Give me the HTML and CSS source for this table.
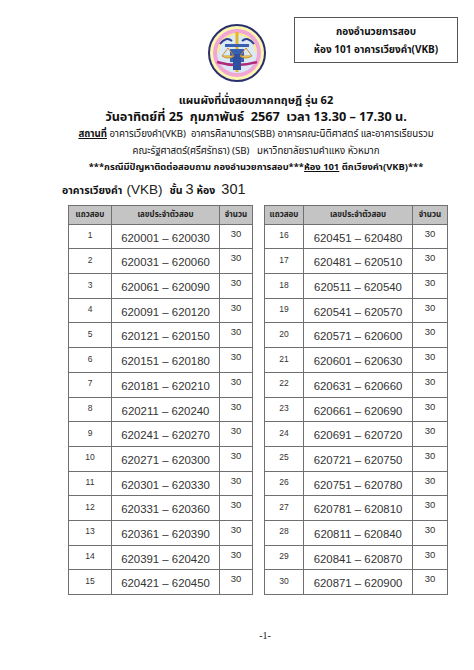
FILE: index.html
```html
<!DOCTYPE html>
<html lang="th">
<head>
<meta charset="utf-8">
<link rel="stylesheet" href="styles.css">
</head>
<body>
<div class="page">
  <header class="top">
    <div class="spacer"></div>
    <div class="logo">
      <svg width="58" height="58" viewBox="0 0 58 58">
        <circle cx="29" cy="29" r="28" fill="#fdf6b0" stroke="#2a2f6e" stroke-width="2"/>
        <circle cx="29" cy="29" r="24" fill="#f2a6d6"/>
        <circle cx="29" cy="29" r="20" fill="#dbe9f7"/>
        <path d="M10 29 A19 19 0 0 1 48 29" fill="none" stroke="#fbe98a" stroke-width="2"/>
        <path d="M9 38 Q29 44 49 38" fill="none" stroke="#b02a7a" stroke-width="2.5"/>
        <path d="M12 20 Q18 12 24 17 M46 20 Q40 12 34 17" fill="none" stroke="#2a3f8f" stroke-width="2"/>
        <rect x="27.5" y="8" width="3" height="40" fill="#e0b530"/>
        <rect x="17" y="20" width="24" height="3" fill="#3b5fb0"/>
        <rect x="22" y="25" width="14" height="13" fill="#3b5fb0"/>
        <rect x="25" y="30" width="8" height="16" fill="#2f4f9f"/>
        <path d="M14 32 L20 24 L26 32 Z M32 32 L38 24 L44 32 Z" fill="none" stroke="#c9962a" stroke-width="1"/>
        <path d="M14 32 Q20 36 26 32 M32 32 Q38 36 44 32" fill="#e6c35a" stroke="#c9962a" stroke-width="1"/>
      </svg>
    </div>
    <div class="boxwrap">
      <div class="office">
        <div>กองอำนวยการสอบ</div>
        <div>ห้อง 101 อาคารเวียงคำ(VKB)</div>
      </div>
    </div>
  </header>

  <section class="intro">
    <p class="t1">แผนผังที่นั่งสอบภาคทฤษฎี รุ่น 62</p>
    <p class="t2">วันอาทิตย์ที่ 25&nbsp; กุมภาพันธ์&nbsp; 2567&nbsp; เวลา 13.30 – 17.30 น.</p>
    <p class="t3"><b class="u">สถานที่</b> อาคารเวียงคำ(VKB)&nbsp; อาคารศิลาบาตร(SBB) อาคารคณะนิติศาสตร์ และอาคารเรียนรวม</p>
    <p class="t3">คณะรัฐศาสตร์(ศรีศรัทธา) (SB)&nbsp;&nbsp; มหาวิทยาลัยรามคำแหง หัวหมาก</p>
    <p class="t4">***กรณีมีปัญหาติดต่อสอบถาม กองอำนวยการสอบ***<span class="u">ห้อง 101</span> ตึกเวียงคำ(VKB)***</p>
  </section>

  <h2 class="room"><span class="th">อาคารเวียงคำ</span><span class="en vkb">(VKB)</span><span class="th floor">ชั้น</span><span class="en num">3</span><span class="th">ห้อง</span><span class="en rm">301</span></h2>

  <div class="tables">
    <table class="seats left">
      <thead><tr><th class="c1">แถวสอบ</th><th class="c2">เลขประจำตัวสอบ</th><th class="c3">จำนวน</th></tr></thead>
      <tbody>
        <tr><td class="n">1</td><td class="r">620001 – 620030</td><td class="k">30</td></tr>
        <tr><td class="n">2</td><td class="r">620031 – 620060</td><td class="k">30</td></tr>
        <tr><td class="n">3</td><td class="r">620061 – 620090</td><td class="k">30</td></tr>
        <tr><td class="n">4</td><td class="r">620091 – 620120</td><td class="k">30</td></tr>
        <tr><td class="n">5</td><td class="r">620121 – 620150</td><td class="k">30</td></tr>
        <tr><td class="n">6</td><td class="r">620151 – 620180</td><td class="k">30</td></tr>
        <tr><td class="n">7</td><td class="r">620181 – 620210</td><td class="k">30</td></tr>
        <tr><td class="n">8</td><td class="r">620211 – 620240</td><td class="k">30</td></tr>
        <tr><td class="n">9</td><td class="r">620241 – 620270</td><td class="k">30</td></tr>
        <tr><td class="n">10</td><td class="r">620271 – 620300</td><td class="k">30</td></tr>
        <tr><td class="n">11</td><td class="r">620301 – 620330</td><td class="k">30</td></tr>
        <tr><td class="n">12</td><td class="r">620331 – 620360</td><td class="k">30</td></tr>
        <tr><td class="n">13</td><td class="r">620361 – 620390</td><td class="k">30</td></tr>
        <tr><td class="n">14</td><td class="r">620391 – 620420</td><td class="k">30</td></tr>
        <tr><td class="n">15</td><td class="r">620421 – 620450</td><td class="k">30</td></tr>
      </tbody>
    </table>
    <table class="seats right">
      <thead><tr><th class="c1">แถวสอบ</th><th class="c2">เลขประจำตัวสอบ</th><th class="c3">จำนวน</th></tr></thead>
      <tbody>
        <tr><td class="n">16</td><td class="r">620451 – 620480</td><td class="k">30</td></tr>
        <tr><td class="n">17</td><td class="r">620481 – 620510</td><td class="k">30</td></tr>
        <tr><td class="n">18</td><td class="r">620511 – 620540</td><td class="k">30</td></tr>
        <tr><td class="n">19</td><td class="r">620541 – 620570</td><td class="k">30</td></tr>
        <tr><td class="n">20</td><td class="r">620571 – 620600</td><td class="k">30</td></tr>
        <tr><td class="n">21</td><td class="r">620601 – 620630</td><td class="k">30</td></tr>
        <tr><td class="n">22</td><td class="r">620631 – 620660</td><td class="k">30</td></tr>
        <tr><td class="n">23</td><td class="r">620661 – 620690</td><td class="k">30</td></tr>
        <tr><td class="n">24</td><td class="r">620691 – 620720</td><td class="k">30</td></tr>
        <tr><td class="n">25</td><td class="r">620721 – 620750</td><td class="k">30</td></tr>
        <tr><td class="n">26</td><td class="r">620751 – 620780</td><td class="k">30</td></tr>
        <tr><td class="n">27</td><td class="r">620781 – 620810</td><td class="k">30</td></tr>
        <tr><td class="n">28</td><td class="r">620811 – 620840</td><td class="k">30</td></tr>
        <tr><td class="n">29</td><td class="r">620841 – 620870</td><td class="k">30</td></tr>
        <tr><td class="n">30</td><td class="r">620871 – 620900</td><td class="k">30</td></tr>
      </tbody>
    </table>
  </div>

  <footer class="pageno">-1-</footer>
</div>
</body>
</html>
```

FILE: styles.css
```css
html, body {
  margin: 0;
  padding: 0;
  background: #ffffff;
}
body {
  width: 474px;
  height: 670px;
  overflow: hidden;
  color: #111;
  font-family: "Noto Sans Thai", "Tahoma", "Loma", "Garuda", "DejaVu Sans", "Liberation Sans", sans-serif;
}
.page {
  display: flex;
  flex-direction: column;
}
.top {
  display: grid;
  grid-template-columns: 208px 58px 1fr;
  height: 84px;
}
.logo {
  padding-top: 24px;
  height: 58px;
}
.logo svg { display: block; }
.boxwrap {
  padding-top: 17px;
  padding-left: 28px;
}
.office {
  width: 162px;
  height: 42px;
  border: 1px solid #555;
  display: flex;
  flex-direction: column;
  justify-content: center;
  align-items: center;
  gap: 2px;
  font-size: 10px;
  font-weight: bold;
  line-height: 16px;
  padding-top: 2px;
  box-sizing: content-box;
}
.intro {
  padding-left: 38px;
  text-align: center;
  margin-top: 8px;
}
.intro p { margin: 0; white-space: nowrap; }
.t1 { font-size: 11px; font-weight: bold; line-height: 17px; }
.t2 { font-size: 12.7px; font-weight: bold; line-height: 17px; }
.t3 { font-size: 9.7px; line-height: 16.5px; }
.t4 { font-size: 9.4px; font-weight: bold; line-height: 17px; }
.u { text-decoration: underline; }
.room {
  margin: 3px 0 0 62px;
  font-weight: normal;
  line-height: 20px;
  height: 20px;
  white-space: nowrap;
  display: flex;
  align-items: baseline;
}
.room .th { font-size: 10.5px; font-weight: bold; }
.room .en { font-family: "Liberation Sans", Arial, sans-serif; font-size: 14.5px; color: #222; }
.room .vkb { margin-left: 4px; margin-right: 7px; font-size: 13.5px; }
.room .num { margin: 0 3px 0 3px; }
.room .rm { margin-left: 6px; }
.tables {
  display: flex;
  gap: 11px;
  margin: 6px 0 0 68px;
  align-items: flex-start;
}
.seats {
  border-collapse: collapse;
  table-layout: fixed;
}
.seats.left { width: 184px; }
.seats.right { width: 183px; }
.seats th, .seats td {
  border: 1px solid #707070;
  padding: 0;
  text-align: center;
  box-sizing: border-box;
}
.seats th {
  background: #c4c4c4;
  height: 18.7px;
  line-height: 12px;
  font-size: 8px;
  font-weight: bold;
  color: #222;
}
.seats td {
  height: 24.7px;
  line-height: 12px;
  color: #333;
  font-family: "Liberation Sans", Arial, sans-serif;
}
.left .c1 { width: 43px; }
.left .c2 { width: 108px; }
.left .c3 { width: 33px; }
.right .c1 { width: 39px; }
.right .c2 { width: 109px; }
.right .c3 { width: 35px; }
.seats td.n {
  font-size: 8.5px;
  vertical-align: top;
  padding-top: 4.5px;
}
.seats td.r {
  font-size: 11.4px;
  vertical-align: top;
  padding-top: 7px;
}
.seats td.k {
  font-size: 9.5px;
  vertical-align: top;
  padding-top: 3px;
}
.pageno {
  margin-top: 35px;
  padding-left: 56px;
  text-align: center;
  line-height: 12px;
  font-family: "Liberation Serif", serif;
  font-size: 10px;
}
```
